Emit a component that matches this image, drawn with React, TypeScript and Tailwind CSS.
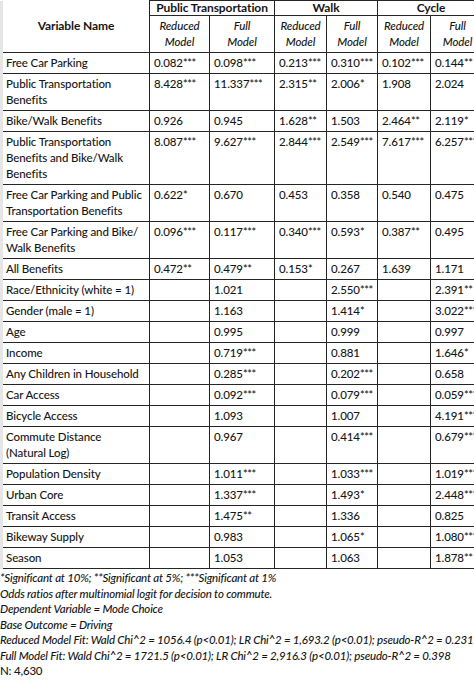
import React from "react";

type Row = { name: React.ReactNode; v: string[] };

const rows: Row[] = [
  { name: "Free Car Parking", v: ["0.082***", "0.098***", "0.213***", "0.310***", "0.102***", "0.144**"] },
  { name: <>Public Transportation<br />Benefits</>, v: ["8.428***", "11.337***", "2.315**", "2.006*", "1.908", "2.024"] },
  { name: "Bike/Walk Benefits", v: ["0.926", "0.945", "1.628**", "1.503", "2.464**", "2.119*"] },
  { name: <>Public Transportation<br />Benefits and Bike/Walk<br />Benefits</>, v: ["8.087***", "9.627***", "2.844***", "2.549***", "7.617***", "6.257***"] },
  { name: <>Free Car Parking and Public<br />Transportation Benefits</>, v: ["0.622*", "0.670", "0.453", "0.358", "0.540", "0.475"] },
  { name: <>Free Car Parking and Bike/<br />Walk Benefits</>, v: ["0.096***", "0.117***", "0.340***", "0.593*", "0.387**", "0.495"] },
  { name: "All Benefits", v: ["0.472**", "0.479**", "0.153*", "0.267", "1.639", "1.171"] },
  { name: "Race/Ethnicity (white = 1)", v: ["", "1.021", "", "2.550***", "", "2.391**"] },
  { name: "Gender (male = 1)", v: ["", "1.163", "", "1.414*", "", "3.022***"] },
  { name: "Age", v: ["", "0.995", "", "0.999", "", "0.997"] },
  { name: "Income", v: ["", "0.719***", "", "0.881", "", "1.646*"] },
  { name: "Any Children in Household", v: ["", "0.285***", "", "0.202***", "", "0.658"] },
  { name: "Car Access", v: ["", "0.092***", "", "0.079***", "", "0.059***"] },
  { name: "Bicycle Access", v: ["", "1.093", "", "1.007", "", "4.191***"] },
  { name: <>Commute Distance<br />(Natural Log)</>, v: ["", "0.967", "", "0.414***", "", "0.679***"] },
  { name: "Population Density", v: ["", "1.011***", "", "1.033***", "", "1.019***"] },
  { name: "Urban Core", v: ["", "1.337***", "", "1.493*", "", "2.448***"] },
  { name: "Transit Access", v: ["", "1.475**", "", "1.336", "", "0.825"] },
  { name: "Bikeway Supply", v: ["", "0.983", "", "1.065*", "", "1.080***"] },
  { name: "Season", v: ["", "1.053", "", "1.063", "", "1.878**"] },
];

function Val({ s }: { s: string }) {
  const m = s.match(/^([^*]*)(\**)$/);
  const num = m ? m[1] : s;
  const stars = m ? m[2] : "";
  return (
    <>
      {num}
      {stars && <span className="text-[11px] leading-none tracking-[-0.4px]">{stars}</span>}
    </>
  );
}

const cell = "border border-[#262626] pl-[4px] pr-[1px] pt-[2px] pb-[2px] align-top text-left whitespace-nowrap overflow-hidden";
const first = "border border-[#262626] border-l-[3px] border-l-[#e6e6e6] pl-[3px] pr-[2px] pt-[2px] pb-[2px] align-top text-left whitespace-nowrap";

export default function App() {
  return (
    <div
      className="w-[474px] h-[680px] overflow-hidden bg-white text-[#161616] text-[11.5px] font-medium leading-4 tracking-[-0.1px]"
      style={{ fontFamily: "Lato, 'Open Sans', sans-serif" }}
    >
      <table className="table-fixed border-collapse w-[483px]">
        <colgroup>
          <col className="w-[148px]" />
          <col className="w-[60px]" />
          <col className="w-[65px]" />
          <col className="w-[52px]" />
          <col className="w-[51px]" />
          <col className="w-[53px]" />
          <col className="w-[54px]" />
        </colgroup>
        <thead>
          <tr>
            <th
              rowSpan={2}
              className="border border-[#262626] border-t-0 border-l-[3px] border-l-[#e6e6e6] align-middle text-center font-bold text-[12px]"
            >
              Variable Name
            </th>
            <th colSpan={2} className="border border-[#262626] text-center font-bold text-[12px] leading-[14px] py-0 whitespace-nowrap">
              Public Transportation
            </th>
            <th colSpan={2} className="border border-[#262626] text-center font-bold text-[12px] leading-[14px] py-0">
              Walk
            </th>
            <th colSpan={2} className="border border-[#262626] text-center font-bold text-[12px] leading-[14px] py-0">
              Cycle
            </th>
          </tr>
          <tr>
            {["Reduced", "Full", "Reduced", "Full", "Reduced", "Full"].map((t, i) => (
              <th key={i} className="border border-[#262626] text-center italic font-medium pt-[2px] pb-[2px] whitespace-nowrap">
                {t}
                <br />
                Model
              </th>
            ))}
          </tr>
        </thead>
        <tbody>
          {rows.map((r, i) => (
            <tr key={i}>
              <td className={first}>{r.name}</td>
              {r.v.map((s, j) => (
                <td key={j} className={cell}>
                  <Val s={s} />
                </td>
              ))}
            </tr>
          ))}
        </tbody>
      </table>
      <div className="pt-[1px] text-[11.5px] leading-[15.5px] italic whitespace-nowrap tracking-[-0.2px]">
        <div>*Significant at 10%; **Significant at 5%; ***Significant at 1%</div>
        <div>Odds ratios after multinomial logit for decision to commute.</div>
        <div>Dependent Variable = Mode Choice</div>
        <div>Base Outcome = Driving</div>
        <div>Reduced Model Fit: Wald Chi^2 = 1056.4 (p&lt;0.01); LR Chi^2 = 1,693.2 (p&lt;0.01); pseudo-R^2 = 0.231</div>
        <div>Full Model Fit: Wald Chi^2 = 1721.5 (p&lt;0.01); LR Chi^2 = 2,916.3 (p&lt;0.01); pseudo-R^2 = 0.398</div>
        <div className="not-italic">N: 4,630</div>
      </div>
    </div>
  );
}
